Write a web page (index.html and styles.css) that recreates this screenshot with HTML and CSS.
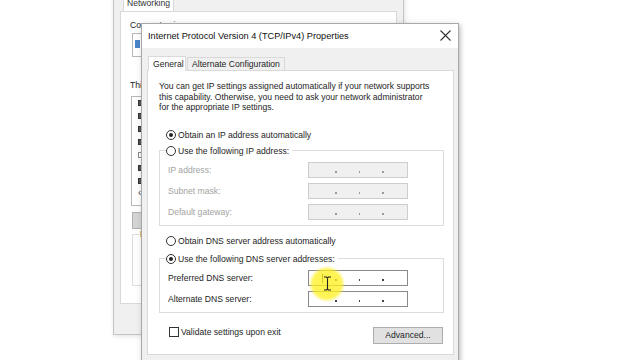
FILE: index.html
```html
<!DOCTYPE html>
<html>
<head>
<meta charset="utf-8">
<title>IPv4 Properties</title>
<link rel="stylesheet" href="styles.css">
</head>
<body>
<div class="desktop">
  <div class="bgwin">
    <div class="bg-tabs"><div class="bg-tab">Networking</div></div>
    <div class="bg-panel">
      <div class="bg-label">Connect using:</div>
      <div class="bg-adapter"><span class="bg-icon"></span></div>
      <div class="bg-label bg-items-label">This connection uses the following items:</div>
      <div class="bg-list">
        <span class="bg-chk"></span>
        <span class="bg-chk"></span>
        <span class="bg-chk"></span>
        <span class="bg-chk"></span>
        <span class="bg-chk off"></span>
        <span class="bg-chk"></span>
        <span class="bg-chk"></span>
        <span class="bg-scroll">‹</span>
      </div>
      <div class="bg-btn">Install...</div>
      <div class="bg-desc"><span class="bg-desc-legend">Description</span></div>
    </div>
  </div>

  <div class="dialog">
    <div class="titlebar">
      <span class="title">Internet Protocol Version 4 (TCP/IPv4) Properties</span>
      <svg class="close" width="11" height="11" viewBox="0 0 11 11"><path d="M0.5 0.5 L10.5 10.5 M10.5 0.5 L0.5 10.5" stroke="#333" stroke-width="1.1" fill="none"/></svg>
    </div>
    <div class="dlg-body">
      <div class="tabs">
        <div class="tab active">General</div>
        <div class="tab">Alternate Configuration</div>
      </div>
      <div class="panel">
        <p class="desc">You can get IP settings assigned automatically if your network supports<br>this capability. Otherwise, you need to ask your network administrator<br>for the appropriate IP settings.</p>

        <div class="radio-row first"><span class="radio on"></span><span>Obtain an IP address automatically</span></div>
        <fieldset class="group">
          <legend class="radio-row"><span class="radio"></span><span>Use the following IP address:</span></legend>
          <div class="field disabled"><span class="flabel">IP address:</span><span class="ipbox"><i></i><i></i><i></i></span></div>
          <div class="field disabled"><span class="flabel">Subnet mask:</span><span class="ipbox"><i></i><i></i><i></i></span></div>
          <div class="field disabled"><span class="flabel">Default gateway:</span><span class="ipbox"><i></i><i></i><i></i></span></div>
        </fieldset>

        <div class="radio-row dns"><span class="radio"></span><span>Obtain DNS server address automatically</span></div>
        <fieldset class="group group-dns">
          <legend class="radio-row"><span class="radio on"></span><span>Use the following DNS server addresses:</span></legend>
          <div class="field"><span class="flabel">Preferred DNS server:</span><span class="ipbox"><b class="caret"></b><i></i><i></i><i></i></span></div>
          <div class="field"><span class="flabel">Alternate DNS server:</span><span class="ipbox"><i></i><i></i><i></i></span></div>
        </fieldset>

        <div class="bottom-row">
          <div class="check-row"><span class="checkbox"></span><span>Validate settings upon exit</span></div>
          <div class="btn">Advanced...</div>
        </div>
      </div>
    </div>
  </div>

  <div class="highlight"></div>
  <svg class="ibeam" width="9" height="15" viewBox="0 0 9 15"><path d="M1 1 H3.5 L4.5 2 L5.5 1 H8 M4.5 2 V13 M1 14 H3.5 L4.5 13 L5.5 14 H8" stroke="#222" stroke-width="1.1" fill="none"/></svg>
</div>
</body>
</html>
```
FILE: styles.css
```css
* { box-sizing: border-box; }
html, body { margin: 0; padding: 0; }
body {
  width: 640px;
  height: 360px;
  overflow: hidden;
  background: #ffffff;
  font-family: "Liberation Sans", Arial, sans-serif;
  font-size: 8.6px;
  color: #1e1e1e;
}
.desktop { position: relative; width: 640px; height: 360px; overflow: hidden; }

/* background window */
.bgwin {
  position: absolute;
  left: 113px;
  top: -20px;
  width: 291px;
  height: 355px;
  background: #f0f0f0;
  border: 1px solid #c4c4c4;
  box-shadow: 1px 1px 5px rgba(0,0,0,0.12);
  padding: 0 6px;
  display: flex;
  flex-direction: column;
}
.bg-tabs { height: 30px; display: flex; align-items: flex-end; }
.bg-tab {
  margin-left: 3px;
  width: 51px;
  height: 20px;
  background: #fff;
  border: 1px solid #d9d9d9;
  border-bottom: none;
  padding: 6px 0 0 3px;
  line-height: 11px;
  color: #333;
}
.bg-panel {
  height: 293px;
  background: #fff;
  border: 1px solid #d9d9d9;
  padding: 8px 0 0 9px;
  display: flex;
  flex-direction: column;
  align-items: flex-start;
}
.bg-label { line-height: 11px; white-space: nowrap; color: #222; }
.bg-adapter {
  margin: 2px 0 0 2px;
  width: 200px;
  height: 24px;
  border: 1px solid #b8b8b8;
  background: #fff;
  padding: 6px 0 0 2px;
}
.bg-icon { display: block; width: 5px; height: 8px; background: #4a86c8; }
.bg-items-label { margin-top: 23px; }
.bg-list {
  margin: 5px 0 0 1px;
  width: 220px;
  height: 110px;
  border: 1px solid #b8b8b8;
  padding: 3px 0 0 6px;
  display: flex;
  flex-direction: column;
  gap: 7px;
}
.bg-chk { display: block; width: 6px; height: 6px; border: 1px solid #333; background: #555; }
.bg-chk.off { background: #fff; border-color: #888; }
.bg-scroll { line-height: 8px; font-size: 10px; color: #444; margin-top: -2px; }
.bg-btn {
  margin: 6px 0 0 2px;
  width: 70px;
  height: 17px;
  background: #d4d4d4;
  border: 1px solid #b0b0b0;
  padding-left: 10px;
  line-height: 15px;
}
.bg-desc {
  margin: 5px 0 0 2px;
  width: 250px;
  height: 52px;
  border: 1px solid #dcdcdc;
  position: relative;
}
.bg-desc-legend {
  display: block;
  margin: -6px 0 0 6px;
  width: fit-content;
  background: #fff;
  padding: 0 1px;
  line-height: 11px;
}

/* dialog */
.dialog {
  position: absolute;
  left: 141px;
  top: 23px;
  width: 318px;
  height: 345px;
  background: #f0f0f0;
  border: 1px solid #a8a8a8;
  box-shadow: 2px 2px 4px rgba(0,0,0,0.18), 0 0 8px rgba(0,0,0,0.08);
  display: flex;
  flex-direction: column;
}
.titlebar {
  height: 24px;
  background: #fff;
  display: flex;
  align-items: center;
  justify-content: space-between;
  padding: 0 7px 0 6px;
}
.title { font-size: 9.2px; color: #111; white-space: nowrap; }
.close { display: block; margin-top: -2px; }
.dlg-body { padding: 7px 4px 0 5px; display: flex; flex-direction: column; }
.tabs { display: flex; align-items: flex-end; height: 15px; }
.tab {
  height: 13px;
  padding: 0 4px;
  line-height: 12px;
  background: #f0f0f0;
  border: 1px solid #d9d9d9;
  border-bottom: none;
  white-space: nowrap;
  margin-left: 1px;
}
.tab.active {
  width: 38px;
  height: 15px;
  background: #fff;
  line-height: 14px;
  margin-left: 1px;
  margin-bottom: -1px;
  position: relative;
  z-index: 1;
}
.panel {
  height: 285px;
  background: #fff;
  border: 1px solid #d9d9d9;
  padding: 10px 9px 0 11px;
  display: flex;
  flex-direction: column;
}
.desc { margin: 0; line-height: 10.5px; white-space: nowrap; color: #1e1e1e; }

.radio-row {
  display: flex;
  align-items: center;
  gap: 2px;
  height: 12px;
  padding-left: 7px;
  white-space: nowrap;
}
.radio-row.first { margin-top: 16px; }
.radio-row.dns { margin-top: 9px; }
.radio {
  width: 10px;
  height: 10px;
  border: 1px solid #333;
  border-radius: 50%;
  background: #fff;
  display: flex;
  align-items: center;
  justify-content: center;
  flex: none;
}
.radio.on::after {
  content: "";
  width: 4px;
  height: 4px;
  border-radius: 50%;
  background: #222;
}

.group {
  margin: 4px 0 0 0;
  border: 1px solid #dcdcdc;
  padding: 5px 0 5px 8px;
  display: flex;
  flex-direction: column;
  gap: 5px;
  min-width: 0;
}
.group-dns { margin-top: 6px; }
.group legend.radio-row {
  margin-left: -2px;
  padding: 0 3px 0 0;
}
.field { display: flex; align-items: center; height: 16px; }
.flabel { width: 140px; white-space: nowrap; }
.field.disabled .flabel { color: #a3a3a3; }
.ipbox {
  width: 100px;
  height: 16px;
  border: 1px solid #8a8a8a;
  background: #fff;
  display: flex;
  align-items: flex-end;
  padding: 0 0 4px 26px;
  gap: 22px;
  position: relative;
}
.ipbox i { display: block; width: 1.5px; height: 1.5px; background: #444; }
.field.disabled .ipbox { background: #f0f0f0; border-color: #cdcdcd; }
.field.disabled .ipbox i { background: #9a9a9a; }
.caret {
  position: absolute;
  left: 13px;
  top: 3px;
  width: 1px;
  height: 9px;
  background: #333;
}

.bottom-row {
  margin-top: 14px;
  display: flex;
  justify-content: space-between;
  align-items: flex-start;
}
.check-row { display: flex; align-items: center; gap: 2px; padding-left: 10px; height: 10px; white-space: nowrap; }
.checkbox { width: 10px; height: 10px; border: 1px solid #333; background: #fff; flex: none; }
.btn {
  width: 70px;
  height: 17px;
  margin-right: 1px;
  background: #e1e1e1;
  border: 1px solid #adadad;
  display: flex;
  align-items: center;
  justify-content: center;
}

/* cursor highlight overlay */
.highlight {
  position: absolute;
  left: 309px;
  top: 266px;
  width: 36px;
  height: 36px;
  border-radius: 50%;
  background: radial-gradient(circle, rgba(255,240,30,0.8) 0, rgba(255,240,30,0.75) 55%, rgba(255,240,30,0) 72%);
  pointer-events: none;
}
.ibeam { position: absolute; left: 323px; top: 276px; }
```
